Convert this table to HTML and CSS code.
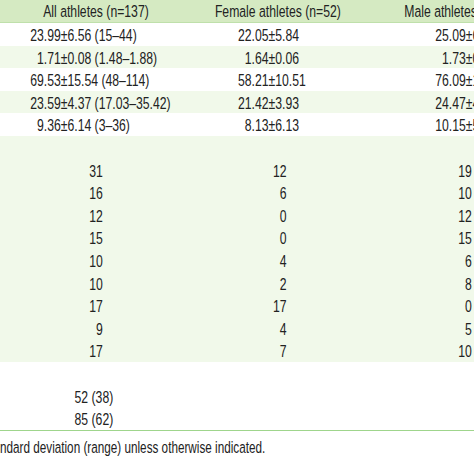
FILE: index.html
```html
<!DOCTYPE html>
<html>
<head>
<meta charset="utf-8">
<link rel="stylesheet" href="styles.css">
</head>
<body>
<div class="table">
  <div class="row head">
    <div class="c1 h">All athletes (n=137)</div>
    <div class="c2 h">Female athletes (n=52)</div>
    <div class="c3 h">Male athletes (n=85)</div>
  </div>
  <div class="row">
    <div class="c1 pm"><span class="a">23.99</span><span class="b">±6.56 (15–44)</span></div>
    <div class="c2 pm"><span class="a">22.05</span><span class="b">±5.84</span></div>
    <div class="c3 pm"><span class="a">25.09</span><span class="b">±6.80</span></div>
  </div>
  <div class="row alt">
    <div class="c1 pm"><span class="a">1.71</span><span class="b">±0.08 (1.48–1.88)</span></div>
    <div class="c2 pm"><span class="a">1.64</span><span class="b">±0.06</span></div>
    <div class="c3 pm"><span class="a">1.73</span><span class="b">±0.06</span></div>
  </div>
  <div class="row">
    <div class="c1 pm"><span class="a">69.53</span><span class="b">±15.54 (48–114)</span></div>
    <div class="c2 pm"><span class="a">58.21</span><span class="b">±10.51</span></div>
    <div class="c3 pm"><span class="a">76.09</span><span class="b">±14.54</span></div>
  </div>
  <div class="row alt">
    <div class="c1 pm"><span class="a">23.59</span><span class="b">±4.37 (17.03–35.42)</span></div>
    <div class="c2 pm"><span class="a">21.42</span><span class="b">±3.93</span></div>
    <div class="c3 pm"><span class="a">24.47</span><span class="b">±4.31</span></div>
  </div>
  <div class="row">
    <div class="c1 pm"><span class="a">9.36</span><span class="b">±6.14 (3–36)</span></div>
    <div class="c2 pm"><span class="a">8.13</span><span class="b">±6.13</span></div>
    <div class="c3 pm"><span class="a">10.15</span><span class="b">±5.96</span></div>
  </div>
  <div class="block alt">
    <div class="row"><div class="c1"></div><div class="c2"></div><div class="c3"></div></div>
    <div class="row"><div class="c1 n">31</div><div class="c2 n">12</div><div class="c3 n">19</div></div>
    <div class="row"><div class="c1 n">16</div><div class="c2 n">6</div><div class="c3 n">10</div></div>
    <div class="row"><div class="c1 n">12</div><div class="c2 n">0</div><div class="c3 n">12</div></div>
    <div class="row"><div class="c1 n">15</div><div class="c2 n">0</div><div class="c3 n">15</div></div>
    <div class="row"><div class="c1 n">10</div><div class="c2 n">4</div><div class="c3 n">6</div></div>
    <div class="row"><div class="c1 n">10</div><div class="c2 n">2</div><div class="c3 n">8</div></div>
    <div class="row"><div class="c1 n">17</div><div class="c2 n">17</div><div class="c3 n">0</div></div>
    <div class="row"><div class="c1 n">9</div><div class="c2 n">4</div><div class="c3 n">5</div></div>
    <div class="row"><div class="c1 n">17</div><div class="c2 n">7</div><div class="c3 n">10</div></div>
  </div>
  <div class="block last">
    <div class="row"><div class="c1"></div><div class="c2"></div><div class="c3"></div></div>
    <div class="row"><div class="c1 np">52 (38)</div><div class="c2"></div><div class="c3"></div></div>
    <div class="row"><div class="c1 np">85 (62)</div><div class="c2"></div><div class="c3"></div></div>
  </div>
</div>
<p class="note">ndard deviation (range) unless otherwise indicated.</p>
</body>
</html>
```

FILE: styles.css
```css
html, body {
  margin: 0;
  padding: 0;
  background: #ffffff;
  overflow: hidden;
}
body {
  width: 474px;
  height: 474px;
  font-family: "Liberation Sans", Arial, sans-serif;
  font-size: 16.3px;
  color: #222222;
}
/* condensed face: the whole table is drawn at 76% width */
.table {
  width: 725px;
  transform: scaleX(0.75);
  transform-origin: 0 0;
}
.row {
  display: grid;
  grid-template-columns: 249px 243px 243px;
  height: 22.6px;
  line-height: 24px;
  white-space: nowrap;
}
.head {
  height: 22px;
  line-height: 22px;
  background: #d5eac2;
  border-bottom: 1px solid #bfe0ab;
}
.alt {
  background: #f1f9ea;
}
.h {
  text-align: center;
}
.head .c1 {
  padding-left: 7px;
}
.pm {
  display: grid;
}
.c1.pm { grid-template-columns: 81px auto; }
.c2.pm { grid-template-columns: 109px auto; }
.c3.pm { grid-template-columns: 129px auto; }
.pm .a {
  text-align: right;
}
.n {
  text-align: right;
}
.c1.n { padding-right: 112px; }
.c2.n { padding-right: 110px; }
.c3.n { padding-right: 106px; }
.np {
  text-align: right;
  padding-right: 98px;
}
.last {
  border-bottom: 1.5px solid #9fd58c;
}
.note {
  margin: 0;
  padding-top: 5px;
  line-height: 22px;
  white-space: nowrap;
  transform: scaleX(0.72);
  transform-origin: 0 0;
}
```
